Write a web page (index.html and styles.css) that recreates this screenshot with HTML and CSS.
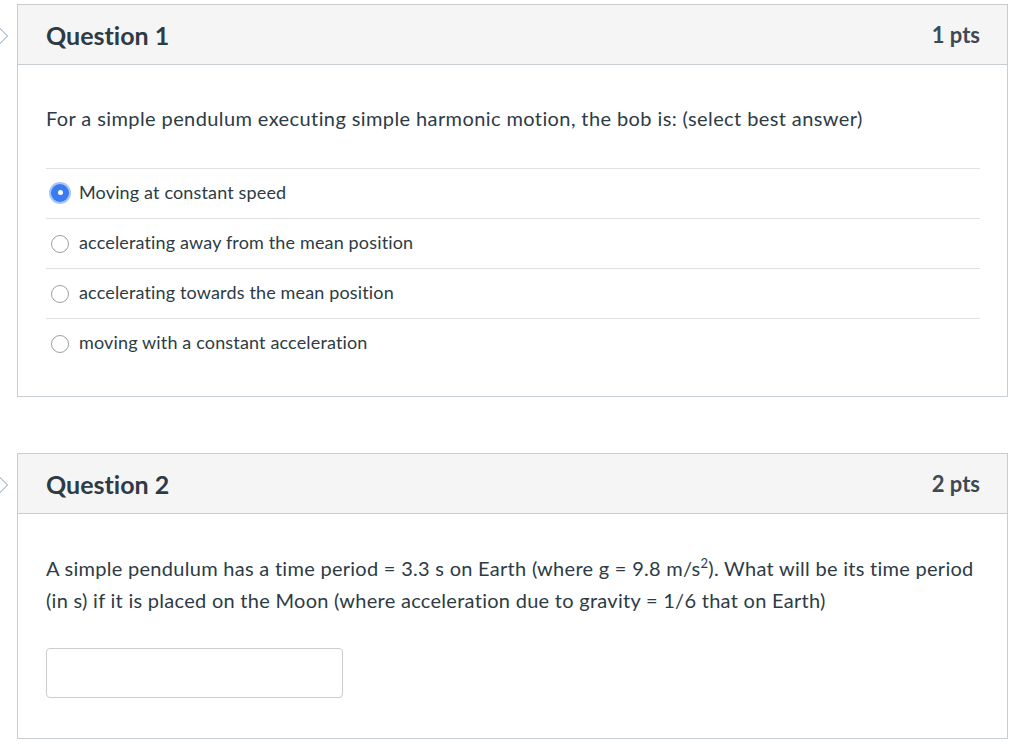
FILE: index.html
```html
<!DOCTYPE html>
<html>
<head>
<meta charset="utf-8">
<link rel="stylesheet" href="styles.css">
</head>
<body>
<div class="page">
  <div class="qwrap">
    <span class="chev"></span>
    <div class="card">
      <div class="head">
        <span class="title">Question 1</span>
        <span class="pts">1 pts</span>
      </div>
      <div class="body">
        <p class="qtext">For a simple pendulum executing simple harmonic motion, the bob is: (select best answer)</p>
        <ul class="answers">
          <li><span class="radio on"></span>Moving at constant speed</li>
          <li><span class="radio"></span>accelerating away from the mean position</li>
          <li><span class="radio"></span>accelerating towards the mean position</li>
          <li><span class="radio"></span>moving with a constant acceleration</li>
        </ul>
      </div>
    </div>
  </div>
  <div class="qwrap q2">
    <span class="chev"></span>
    <div class="card">
      <div class="head">
        <span class="title">Question 2</span>
        <span class="pts">2 pts</span>
      </div>
      <div class="body">
        <p class="qtext two">A simple pendulum has a time period = 3.3 s on Earth (where g = 9.8 m/s<sup>2</sup>). What will be its time period (in s) if it is placed on the Moon (where acceleration due to gravity = 1/6 that on Earth)</p>
        <div class="input"></div>
      </div>
    </div>
  </div>
</div>
</body>
</html>
```
FILE: styles.css
```css
* { box-sizing: border-box; }
html, body { margin: 0; padding: 0; background: #fff; }
body {
  font-family: Lato, "Open Sans", sans-serif; color: #2d3b45;
  font-variant-ligatures: none; font-feature-settings: "liga" 0;
}
.page { padding-top: 4px; }
.qwrap { position: relative; padding-left: 17px; width: 1008px; }
.q2 { margin-top: 56px; }
.chev {
  position: absolute; left: -8px; top: 25px;
  width: 14px; height: 14px;
  border-top: 2px solid #bccbe0; border-right: 2px solid #bccbe0;
  border-radius: 1px;
  transform: rotate(45deg);
}
.card { border: 1px solid #c7cdd1; background: #fff; }
.head {
  background: #f5f5f5; border-bottom: 1px solid #c7cdd1;
  height: 60px; display: flex; align-items: center; justify-content: space-between;
  padding: 0 27px 0 28px;
}
.title { font-weight: 700; font-size: 25px; color: #2d3b45; }
.pts { font-weight: 700; font-size: 22px; color: #3d4a53; }
.body { padding: 0 27px 0 28px; }
.qtext { margin: 0; padding-top: 40px; font-size: 20px; letter-spacing: 0.4px; line-height: 26px; height: 103px; }
.answers { list-style: none; margin: 0; padding: 0 0 27px; border-top: 1px solid #dfe2e4; }
.answers li {
  height: 50px; display: flex; align-items: center;
  border-bottom: 1px solid #dfe2e4; font-size: 18px; letter-spacing: 0.15px;
  padding-left: 5px; padding-bottom: 4px;
}
.answers li:last-child { border-bottom: none; }
.radio {
  width: 18px; height: 18px; border-radius: 50%;
  border: 1px solid #9aa2a8; margin-right: 10px; flex: none;
  background: #fff; position: relative; top: 2px;
}
.radio.on {
  border: none; background: #3a7cf0; top: 1px;
  box-shadow: 0 0 0 2px #a9c6f7;
  display: flex; align-items: center; justify-content: center;
}
.radio.on::after { content: ""; width: 5px; height: 5px; border-radius: 50%; background: #fff; }
.qtext.two { padding-top: 38px; line-height: 32px; height: auto; letter-spacing: 0.28px; }
sup { font-size: 13px; line-height: 0; }
.input {
  margin-top: 32px; width: 297px; height: 50px;
  border: 1px solid #ccc; border-radius: 4px; margin-bottom: 40px;
}
```
